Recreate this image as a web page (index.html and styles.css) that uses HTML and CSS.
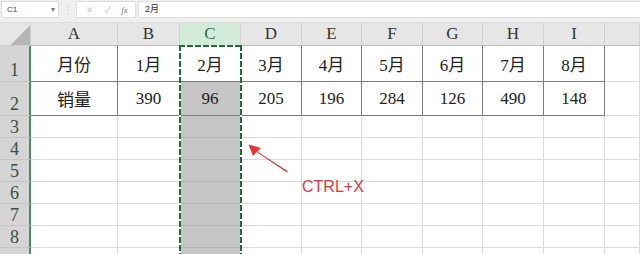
FILE: index.html
```html
<!DOCTYPE html>
<html lang="zh-CN">

<head>
    <meta charset="UTF-8">
    <meta name="viewport" content="width=device-width, initial-scale=1.0">
    <title>剪切整列</title>
    <link rel="stylesheet" href="styles.css">
</head>

<body>
    <div class="topbar">
        <div class="namebox"><span>C1</span><span class="drop">▾</span></div>
        <div class="sep">⋮</div>
        <div class="fxbtns"><span class="x">✕</span><span class="ok">✓</span><span class="fx">fx</span></div>
        <div class="formula">2月</div>
    </div>

    <div class="sheet">
        <div class="corner"></div>
        <div class="ch">A</div>
        <div class="ch">B</div>
        <div class="ch ch-sel">C</div>
        <div class="ch">D</div>
        <div class="ch">E</div>
        <div class="ch">F</div>
        <div class="ch">G</div>
        <div class="ch">H</div>
        <div class="ch">I</div>
        <div class="ch"></div>

        <div class="rh r-tall">1</div>
        <div class="cell data">月份</div>
        <div class="cell data">1月</div>
        <div class="cell data">2月</div>
        <div class="cell data">3月</div>
        <div class="cell data">4月</div>
        <div class="cell data">5月</div>
        <div class="cell data">6月</div>
        <div class="cell data">7月</div>
        <div class="cell data">8月</div>
        <div class="cell"></div>

        <div class="rh r-tall">2</div>
        <div class="cell data">销量</div>
        <div class="cell data">390</div>
        <div class="cell data cut">96</div>
        <div class="cell data">205</div>
        <div class="cell data">196</div>
        <div class="cell data">284</div>
        <div class="cell data">126</div>
        <div class="cell data">490</div>
        <div class="cell data">148</div>
        <div class="cell"></div>

        <div class="rh">3</div>
        <div class="cell"></div><div class="cell"></div><div class="cell cut"></div><div class="cell"></div><div class="cell"></div>
        <div class="cell"></div><div class="cell"></div><div class="cell"></div><div class="cell"></div><div class="cell"></div>

        <div class="rh">4</div>
        <div class="cell"></div><div class="cell"></div><div class="cell cut"></div><div class="cell"></div><div class="cell"></div>
        <div class="cell"></div><div class="cell"></div><div class="cell"></div><div class="cell"></div><div class="cell"></div>

        <div class="rh">5</div>
        <div class="cell"></div><div class="cell"></div><div class="cell cut"></div><div class="cell"></div><div class="cell"></div>
        <div class="cell"></div><div class="cell"></div><div class="cell"></div><div class="cell"></div><div class="cell"></div>

        <div class="rh">6</div>
        <div class="cell"></div><div class="cell"></div><div class="cell cut"></div><div class="cell"></div><div class="cell"></div>
        <div class="cell"></div><div class="cell"></div><div class="cell"></div><div class="cell"></div><div class="cell"></div>

        <div class="rh">7</div>
        <div class="cell"></div><div class="cell"></div><div class="cell cut"></div><div class="cell"></div><div class="cell"></div>
        <div class="cell"></div><div class="cell"></div><div class="cell"></div><div class="cell"></div><div class="cell"></div>

        <div class="rh">8</div>
        <div class="cell"></div><div class="cell"></div><div class="cell cut"></div><div class="cell"></div><div class="cell"></div>
        <div class="cell"></div><div class="cell"></div><div class="cell"></div><div class="cell"></div><div class="cell"></div>

        <!-- 第 9 列只露出一點，行號看不到 -->
        <div class="rh"></div>
        <div class="cell"></div><div class="cell"></div><div class="cell cut"></div><div class="cell"></div><div class="cell"></div>
        <div class="cell"></div><div class="cell"></div><div class="cell"></div><div class="cell"></div><div class="cell"></div>

        <!-- 剪切後的虛線框 -->
        <div class="ants"></div>

        <!-- 標註 -->
        <svg class="arrow" viewBox="240 136 56 42" width="56" height="42">
            <polygon points="248.5,144.5 261,148 253,156" fill="#ee3438" />
            <polygon points="255,150 258,153 287,172.5 287.5,171" fill="#ee3438" />
        </svg>
        <div class="note">CTRL+X</div>
    </div>
</body>

</html>
```

FILE: styles.css
```css
* {
    box-sizing: border-box;
    padding: 0;
    margin: 0;
}

body {
    width: 640px;
    height: 254px;
    overflow: hidden;
    background: #fff;
    font-family: "Liberation Serif", "Noto Sans CJK SC", serif;
}

/* 名稱方塊 + 編輯列 */
.topbar {
    height: 23px;
    display: flex;
    align-items: flex-start;
    padding-top: 1px;
    background: #efefef;
    border-bottom: 1px solid #dcdcdc;
    font-family: "Liberation Sans", "Noto Sans CJK SC", sans-serif;
}

.namebox {
    width: 58px;
    height: 17px;
    margin-left: 1px;
    background: #fff;
    border: 1px solid #dedede;
    display: flex;
    align-items: center;
    justify-content: space-between;
    padding: 0 3px 0 5px;
    font-size: 8px;
    color: #444;
}

.namebox .drop {
    font-size: 8px;
    color: #777;
}

.sep {
    width: 17px;
    text-align: center;
    font-size: 10px;
    line-height: 17px;
    color: #c4c4c4;
}

.fxbtns {
    width: 60px;
    height: 17px;
    background: #fff;
    border: 1px solid #dedede;
    display: flex;
    align-items: center;
    justify-content: space-around;
    padding: 0 2px 0 4px;
    font-size: 9px;
    color: #c8c8c8;
}

.fxbtns .fx {
    font-style: italic;
    font-family: "Liberation Serif", serif;
    color: #777;
    font-size: 9px;
}

.formula {
    flex: 1;
    height: 17px;
    margin-left: 2px;
    background: #fff;
    border: 1px solid #dedede;
    border-right: 0;
    padding-left: 6px;
    font-size: 9px;
    line-height: 15px;
    color: #333;
}

/* 工作表 */
.sheet {
    position: relative;
    display: grid;
    grid-template-columns: 31px 87px 62px 61px 61px 60px 61px 60px 61px 61px 35px;
    grid-template-rows: 23px 36px 34px repeat(7, 22px);
    font-size: 17px;
    color: #222;
}

.corner {
    background: #e6e6e6 linear-gradient(135deg, transparent 50%, #b5b5b5 50%) no-repeat;
    background-size: 20px 19px;
    background-position: 10px 3px;
    border-right: 1px solid #cfcfcf;
    border-bottom: 1px solid #cfcfcf;
}

.ch {
    background: #e6e6e6;
    border-right: 1px solid #cfcfcf;
    border-bottom: 1px solid #bdbdbd;
    text-align: center;
    line-height: 21px;
    color: #333;
}

.ch-sel {
    background: #d3ecda;
    color: #2f6b47;
}

.rh {
    background: #d5d5d5;
    border-right: 2px solid #4a8c62;
    border-bottom: 1px solid #c4c4c4;
    display: flex;
    align-items: flex-end;
    justify-content: center;
    line-height: 20px;
    color: #3b4f42;
    font-size: 18px;
}

.r-tall {
    padding-bottom: 1px;
}

.cell {
    border-right: 1px solid #dadada;
    border-bottom: 1px solid #dadada;
    display: flex;
    align-items: center;
    justify-content: center;
}

.data {
    border-color: #7d7d7d;
}

.cut {
    background: #c6c6c6;
    border-bottom-color: #b4b4b4;
}

.data.cut {
    border-bottom-color: #7d7d7d;
}

/* 螞蟻線：剪下的範圍 */
.ants {
    position: absolute;
    left: 179px;
    top: 22px;
    width: 63px;
    height: 220px;
    background:
        repeating-linear-gradient(to bottom, #1f6b3b 0 6px, #fff 6px 8px) left top / 2px 100% no-repeat,
        repeating-linear-gradient(to bottom, #1f6b3b 0 6px, #fff 6px 8px) right top / 2px 100% no-repeat,
        repeating-linear-gradient(to right, #1f6b3b 0 6px, #fff 6px 8px) left top / 100% 2px no-repeat;
}

.arrow {
    position: absolute;
    left: 240px;
    top: 113px;
}

.note {
    position: absolute;
    left: 302px;
    top: 155px;
    font-family: "Liberation Sans", sans-serif;
    font-size: 16px;
    color: #e8373c;
}
```
